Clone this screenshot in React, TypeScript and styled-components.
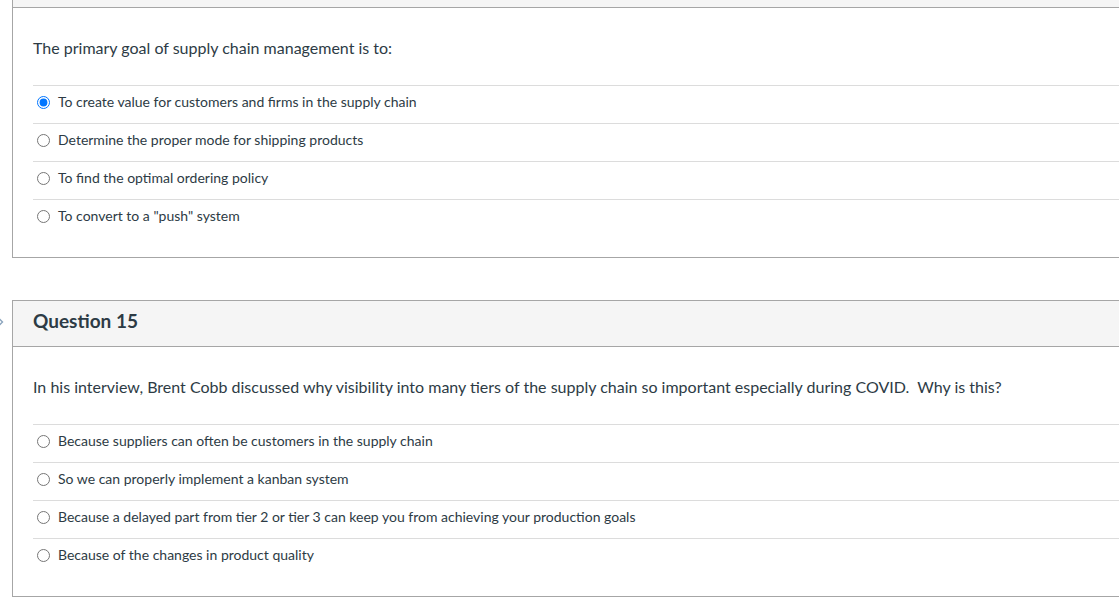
import * as React from "react";
import styled, { createGlobalStyle } from "styled-components";

const GlobalStyle = createGlobalStyle`
  html, body {
    margin: 0;
    padding: 0;
    background: #ffffff;
    overflow: hidden;
  }
  body {
    font-family: Lato, "Open Sans", "Liberation Sans", sans-serif;
    color: #2d3b45;
  }
`;

const Page = styled.div`
  display: flex;
  flex-direction: column;
  gap: 42px;
  padding-left: 12px;
  width: 1140px;
`;

const Card = styled.div<{ $cut?: boolean }>`
  position: relative;
  border: 1px solid #a6a6a6;
  border-right: none;
  border-top: ${(p) => (p.$cut ? "none" : "1px solid #a6a6a6")};
  background: #ffffff;
`;

const Header = styled.div<{ $h: number }>`
  display: flex;
  align-items: center;
  box-sizing: border-box;
  height: ${(p) => p.$h}px;
  padding: 0 0 6px 20px;
  background: #f5f5f5;
  border-bottom: 1px solid #a6a6a6;
`;

const Title = styled.h2`
  margin: 0;
  font-size: 19px;
  line-height: 24px;
  font-weight: 700;
  color: #2d3b45;
`;

const Chevron = styled.svg`
  position: absolute;
  left: -17px;
  top: 15px;
`;

const Body = styled.div`
  padding: 28px 0 20px 20px;
`;

const QuestionText = styled.p`
  margin: 0 0 25px 0;
  font-size: 16px;
  line-height: 24px;
`;

const AnswerList = styled.div`
  display: flex;
  flex-direction: column;
`;

const AnswerRow = styled.label`
  display: flex;
  align-items: center;
  box-sizing: border-box;
  height: 38px;
  padding-bottom: 6px;
  border-top: 1px solid #dcdcdc;
  font-size: 14px;
  color: #2d3b45;
`;

const Radio = styled.input`
  width: 13px;
  height: 13px;
  margin: 1px 8px 0 4px;
`;

type Question = {
  id: string;
  title?: string;
  text: React.ReactNode;
  answers: string[];
  selected?: number;
};

const questions: Question[] = [
  {
    id: "q14",
    text: "The primary goal of supply chain management is to:",
    answers: [
      "To create value for customers and firms in the supply chain",
      "Determine the proper mode for shipping products",
      "To find the optimal ordering policy",
      'To convert to a "push" system',
    ],
    selected: 0,
  },
  {
    id: "q15",
    title: "Question 15",
    text: (
      <>
        In his interview, Brent Cobb discussed why visibility into many tiers of the supply chain so
        important especially during COVID.&nbsp; Why is this?
      </>
    ),
    answers: [
      "Because suppliers can often be customers in the supply chain",
      "So we can properly implement a kanban system",
      "Because a delayed part from tier 2 or tier 3 can keep you from achieving your production goals",
      "Because of the changes in product quality",
    ],
  },
];

const QuestionCard: React.FC<{ q: Question }> = ({ q }) => (
  <Card $cut={!q.title}>
    {q.title && (
      <Chevron width="8" height="12" viewBox="0 0 8 12">
        <path d="M2 1.5 L6.5 6 L2 10.5" fill="none" stroke="#8aa4bd" strokeWidth="1.4" />
      </Chevron>
    )}
    <Header $h={q.title ? 46 : 8}>{q.title && <Title>{q.title}</Title>}</Header>
    <Body>
      <QuestionText>{q.text}</QuestionText>
      <AnswerList>
        {q.answers.map((a, i) => (
          <AnswerRow key={i}>
            <Radio type="radio" name={q.id} defaultChecked={q.selected === i} />
            {a}
          </AnswerRow>
        ))}
      </AnswerList>
    </Body>
  </Card>
);

export default function App() {
  return (
    <>
      <GlobalStyle />
      <Page>
        {questions.map((q) => (
          <QuestionCard key={q.id} q={q} />
        ))}
      </Page>
    </>
  );
}
